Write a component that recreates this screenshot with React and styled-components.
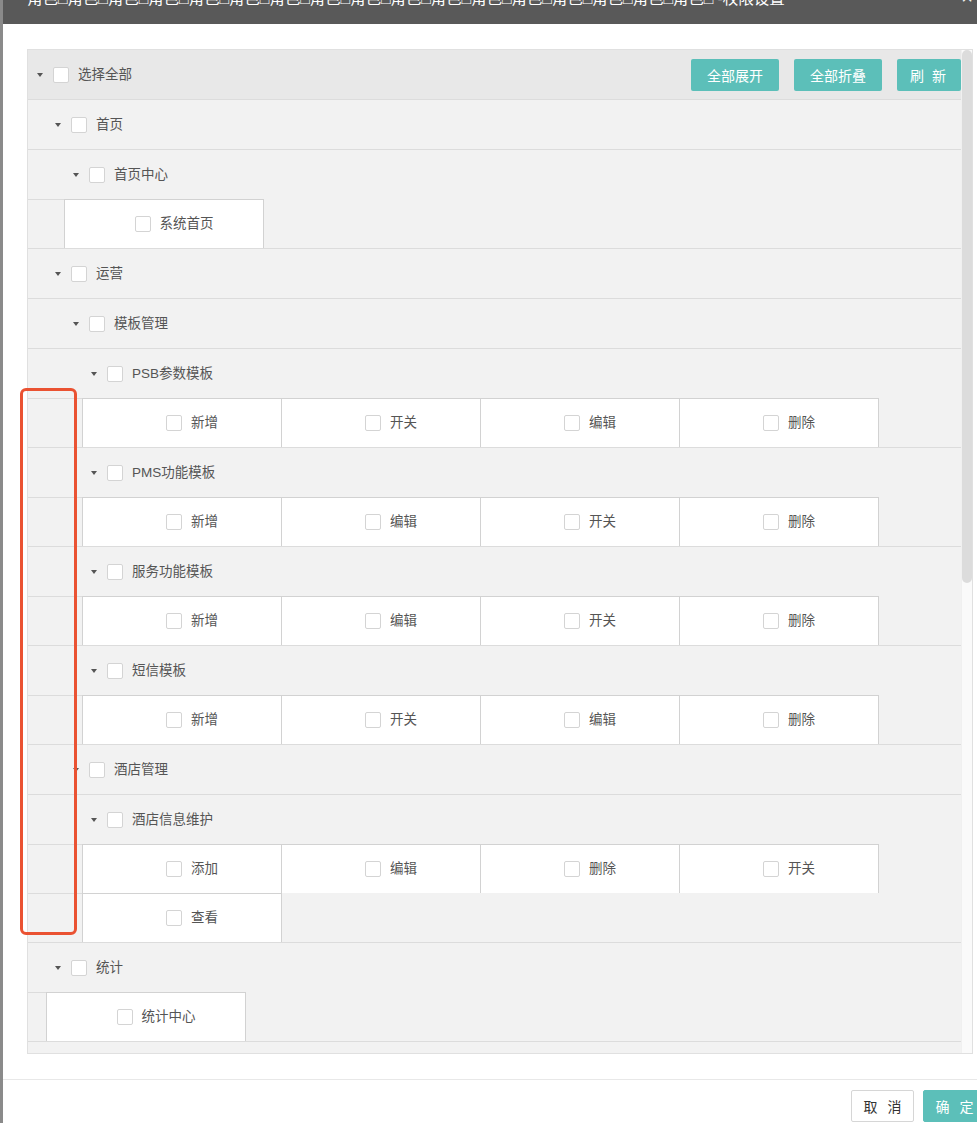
import React from "react";
import styled, { createGlobalStyle } from "styled-components";

const GlobalStyle = createGlobalStyle`
  html, body {
    margin: 0;
    padding: 0;
    overflow: hidden;
    background: #8a8a8a;
  }
  body {
    font-family: "Liberation Sans", "Noto Sans CJK SC", sans-serif;
  }
  * { box-sizing: border-box; }
`;

const Page = styled.div`
  position: relative;
  height: 1123px;
  overflow: hidden;
  padding-left: 3px;
`;

const Modal = styled.div`
  width: 994px;
  background: #fff;
  display: flex;
  flex-direction: column;
`;

const Header = styled.div`
  height: 50px;
  margin-top: -26px;
  background: #595959;
  color: #fff;
  display: flex;
  align-items: center;
  padding: 0 22px 4px 24px;
  font-size: 15.5px;
  white-space: nowrap;
`;

const Title = styled.span`
  flex: 1;
  overflow: hidden;
`;

const Close = styled.span`
  font-size: 20px;
  color: #eee;
  margin-right: 2px;
`;

const Body = styled.div`
  padding: 25px 24px;
`;

const Panel = styled.div`
  height: 1005px;
  border: 1px solid #e0e0e0;
  background: #f2f2f2;
  display: flex;
  overflow: hidden;
`;

const TreeArea = styled.div`
  flex: 1;
  min-width: 0;
  overflow: hidden;
`;

const ScrollTrack = styled.div`
  width: 11px;
  flex: none;
  background: #fafafa;
  border-left: 1px solid #f0f0f0;
`;

const ScrollThumb = styled.div`
  height: 533px;
  width: 10px;
  background: #dcdcdc;
  border-radius: 5px;
`;

const TreeRow = styled.div`
  height: ${(p) => (p.$first ? "49px" : "50px")};
  border-top: ${(p) => (p.$first ? "none" : "1px solid #dcdcdc")};
  background: ${(p) => (p.$first ? "#e8e8e8" : "#f2f2f2")};
  display: flex;
  align-items: center;
  padding-left: ${(p) => 9 + p.$level * 18}px;
`;

const Caret = styled.span`
  width: 0;
  height: 0;
  border-left: 3.5px solid transparent;
  border-right: 3.5px solid transparent;
  border-top: 4px solid #555;
  margin-right: 10px;
  flex: none;
`;

const Check = styled.span`
  width: 16px;
  height: 16px;
  border: 1px solid #d4d4d4;
  border-radius: 2px;
  background: #fff;
  margin-right: 9px;
  flex: none;
`;

const Label = styled.span`
  font-size: 13.5px;
  line-height: 1;
  color: #555;
  white-space: nowrap;
`;

const Toolbar = styled.div`
  margin-left: auto;
  display: flex;
  gap: 15px;
`;

const ToolButton = styled.button`
  width: ${(p) => p.$w}px;
  height: 32px;
  border: none;
  border-radius: 2px;
  background: #5cbfb9;
  color: #fff;
  font-family: inherit;
  font-size: 14px;
  padding: 0;
  letter-spacing: ${(p) => (p.$spaced ? "2px" : "0")};
`;

const LeafRow = styled.div`
  display: flex;
  height: 49px;
  background: #f2f2f2;
`;

const Spacer = styled.div`
  width: ${(p) => p.$w}px;
  flex: none;
  border-top: 1px solid #dcdcdc;
`;

const Cell = styled.div`
  width: 200px;
  flex: none;
  height: 49px;
  background: #fff;
  border: 1px solid #d2d2d2;
  border-bottom: none;
  margin-left: -1px;
  &:nth-child(2) {
    margin-left: 0;
  }
  display: flex;
  align-items: center;
  justify-content: center;
  padding-left: 20px;
`;

const Footer = styled.div`
  border-top: 1px solid #e8e8e8;
  padding: 10px 11px 10px 0;
  display: flex;
  justify-content: flex-end;
  gap: 9px;
`;

const FooterButton = styled.button`
  width: 63px;
  height: 32px;
  border-radius: 2px;
  font-family: inherit;
  font-size: 14px;
  letter-spacing: 3px;
  padding: 0 0 0 3px;
  border: 1px solid ${(p) => (p.$primary ? "#5cbfb9" : "#d6d6d6")};
  background: ${(p) => (p.$primary ? "#5cbfb9" : "#fff")};
  color: ${(p) => (p.$primary ? "#fff" : "#333")};
`;

const Annotation = styled.div`
  position: absolute;
  left: 20px;
  top: 388px;
  width: 57px;
  height: 547px;
  border: 3px solid #ea5232;
  border-radius: 6px;
  pointer-events: none;
`;

const tree = [
  { label: "首页", children: [{ label: "首页中心", leaves: ["系统首页"] }] },
  {
    label: "运营",
    children: [
      {
        label: "模板管理",
        children: [
          { label: "PSB参数模板", leaves: ["新增", "开关", "编辑", "删除"] },
          { label: "PMS功能模板", leaves: ["新增", "编辑", "开关", "删除"] },
          { label: "服务功能模板", leaves: ["新增", "编辑", "开关", "删除"] },
          { label: "短信模板", leaves: ["新增", "开关", "编辑", "删除"] },
        ],
      },
      {
        label: "酒店管理",
        children: [
          { label: "酒店信息维护", leaves: ["添加", "编辑", "删除", "开关", "查看"] },
        ],
      },
    ],
  },
  { label: "统计", leaves: ["统计中心"] },
  {
    label: "系统",
    children: [
      {
        label: "系统管理",
        children: [
          { label: "账号管理", leaves: ["新增", "编辑", "删除", "查看"] },
        ],
      },
    ],
  },
];

function chunk(arr, n) {
  const out = [];
  for (let i = 0; i < arr.length; i += n) out.push(arr.slice(i, i + n));
  return out;
}

function renderNode(node, level, key) {
  const parts = [
    <TreeRow key={key} $level={level}>
      <Caret />
      <Check />
      <Label>{node.label}</Label>
    </TreeRow>,
  ];
  if (node.children) {
    node.children.forEach((c, i) => {
      parts.push(...renderNode(c, level + 1, `${key}-${i}`));
    });
  }
  if (node.leaves && node.leaves.length) {
    chunk(node.leaves, 4).forEach((row, ri) => {
      parts.push(
        <LeafRow key={`${key}-leaf-${ri}`}>
          <Spacer $w={level * 18} />
          {row.map((l, li) => (
            <Cell key={li}>
              <Check />
              <Label>{l}</Label>
            </Cell>
          ))}
        </LeafRow>
      );
    });
  }
  return parts;
}

export default function App() {
  const title = "角色□".repeat(17) + " -权限设置";
  return (
    <Page>
      <GlobalStyle />
      <Modal>
        <Header>
          <Title>{title}</Title>
          <Close>×</Close>
        </Header>
        <Body>
          <Panel>
            <TreeArea>
              <TreeRow $first $level={0}>
                <Caret />
                <Check />
                <Label>选择全部</Label>
                <Toolbar>
                  <ToolButton $w={88}>全部展开</ToolButton>
                  <ToolButton $w={88}>全部折叠</ToolButton>
                  <ToolButton $w={64} $spaced>刷 新</ToolButton>
                </Toolbar>
              </TreeRow>
              {tree.map((n, i) => renderNode(n, 1, `n${i}`))}
            </TreeArea>
            <ScrollTrack>
              <ScrollThumb />
            </ScrollTrack>
          </Panel>
        </Body>
        <Footer>
          <FooterButton>取 消</FooterButton>
          <FooterButton $primary>确 定</FooterButton>
        </Footer>
      </Modal>
      <Annotation />
    </Page>
  );
}
